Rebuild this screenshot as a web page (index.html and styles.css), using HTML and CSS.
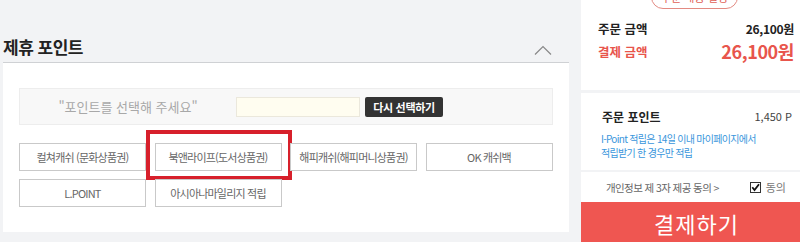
FILE: index.html
```html
<!DOCTYPE html>
<html lang="ko">
<head>
<meta charset="utf-8">
<link rel="stylesheet" href="styles.css">
</head>
<body>
<div class="page">
  <section class="left">
    <div class="head">
      <h2 class="title">제휴 포인트</h2>
      <svg class="chev" width="18" height="10" viewBox="0 0 18 10"><path d="M1 9.5 L9 1.5 L17 9.5" fill="none" stroke="#888" stroke-width="1.2"/></svg>
    </div>
    <div class="panel">
      <div class="selbox">
        <div class="hint">"포인트를 선택해 주세요"</div>
        <div class="field"></div>
        <button class="reset">다시 선택하기</button>
      </div>
      <div class="grid">
        <div class="opt">컬쳐캐쉬 (문화상품권)</div>
        <div class="opt hl">북앤라이프(도서상품권)<span class="mark"></span></div>
        <div class="opt">해피캐쉬(해피머니상품권)</div>
        <div class="opt">OK 캐쉬백</div>
        <div class="opt">L.POINT</div>
        <div class="opt">아시아나마일리지 적립</div>
      </div>
    </div>
  </section>
  <aside class="right">
    <div class="card sum">
      <div class="pill">주문 배송 설정</div>
      <div class="row r1"><span class="lbl">주문 금액</span><span class="amt">26,100원</span></div>
      <div class="row r2"><span class="lbl red">결제 금액</span><span class="big">26,100원</span></div>
    </div>
    <div class="card pts">
      <div class="row r3"><span class="lbl2">주문 포인트</span><span class="pval">1,450 P</span></div>
      <p class="note">I-Point 적립은 14일 이내 마이페이지에서<br>적립받기 한 경우만 적립</p>
    </div>
    <div class="agree">
      <span class="atext">개인정보 제 3자 제공 동의 &gt;</span>
      <span class="chk"><svg width="11" height="11" viewBox="0 0 11 11"><rect x="0.5" y="0.5" width="10" height="10" fill="#fff" stroke="#333"/><path d="M2.3 5.3 L4.5 8 L9 2.2" fill="none" stroke="#111" stroke-width="1.8"/></svg>동의</span>
    </div>
    <button class="pay">결제하기</button>
  </aside>
</div>
</body>
</html>
```
FILE: styles.css
```css
* { box-sizing: border-box; }
html, body { margin: 0; padding: 0; }
body {
  background: #f2f3f5;
  font-family: "Noto Sans CJK KR", "Noto Sans", sans-serif;
  color: #333;
  width: 800px;
  height: 242px;
  overflow: hidden;
}
.page {
  display: flex;
  gap: 12px;
  padding-left: 3px;
}
.left { width: 566px; }
.head {
  height: 63px;
  display: flex;
  align-items: center;
  justify-content: space-between;
  padding: 30px 17px 0 0;
  border-bottom: 1px solid #cfd1d4;
}
.title {
  margin: 0;
  font-size: 17px;
  font-weight: 700;
  color: #222;
  letter-spacing: -0.5px;
}
.chev { margin-top: 7px; }
.panel {
  background: #fff;
  height: 169px;
  padding: 25px 16px 0 16px;
}
.selbox {
  height: 37px;
  background: #f8f8f8;
  border: 1px solid #ededed;
  display: flex;
  align-items: center;
}
.hint {
  width: 216px;
  text-align: center;
  font-size: 13px;
  color: #a8a8a8;
}
.field {
  width: 124px;
  height: 20px;
  background: #fffdf0;
  border: 1px solid #ebe8dc;
}
.reset {
  margin-left: 5px;
  width: 78px;
  height: 20px;
  border: 0;
  border-radius: 2px;
  background: #333;
  color: #fff;
  font-family: inherit;
  font-size: 11px;
  font-weight: 700;
  padding: 0;
  line-height: 20px;
  letter-spacing: -0.3px;
}
.grid {
  margin-top: 18px;
  display: grid;
  grid-template-columns: repeat(4, 127px);
  column-gap: 8.5px;
  row-gap: 8px;
  grid-auto-rows: 28px;
}
.opt {
  position: relative;
  border: 1px solid #c9c9c9;
  background: #fff;
  display: flex;
  align-items: center;
  justify-content: center;
  font-size: 11px;
  color: #666;
  letter-spacing: -0.8px;
  white-space: nowrap;
}
.mark {
  position: absolute;
  left: -10px;
  top: -14px;
  width: 146px;
  height: 50px;
  border: 4px solid #d7202b;
}
.right {
  width: 219px;
  display: flex;
  flex-direction: column;
}
.card { background: #fff; }
.sum {
  height: 90px;
  padding: 0 6px 0 17px;
}
.pill {
  margin: -15px 0 0 53px;
  width: 87px;
  height: 24px;
  border: 1px solid #e38a82;
  border-radius: 12px;
  text-align: center;
  font-size: 11px;
  line-height: 22px;
  color: #e06056;
}
.row {
  display: flex;
  justify-content: space-between;
  align-items: center;
}
.r1 { margin-top: 8px; height: 22px; }
.r2 { height: 24px; }
.lbl { font-size: 12.5px; font-weight: 700; color: #222; }
.lbl.red { color: #e8554c; }
.amt { font-size: 12px; font-weight: 700; color: #222; letter-spacing: -0.3px; }
.big { font-size: 18px; font-weight: 700; color: #e8554c; letter-spacing: -0.4px; }
.pts {
  margin-top: 3px;
  height: 77px;
  padding: 13px 8px 0 21px;
}
.r3 { height: 20px; }
.lbl2 { font-size: 12px; font-weight: 700; color: #222; }
.pval { font-size: 11px; color: #444; }
.note {
  margin: 6px 0 0 -1px;
  font-size: 10px;
  line-height: 14px;
  color: #3a96dc;
  letter-spacing: -0.7px;
}
.agree {
  margin-top: 2px;
  height: 30px;
  background: #fff;
  display: flex;
  align-items: center;
  justify-content: space-between;
  padding: 0 14px 0 25px;
}
.atext { font-size: 10.5px; color: #666; letter-spacing: -0.6px; }
.chk {
  display: flex;
  align-items: center;
  gap: 5px;
  font-size: 11px;
  color: #777;
}
.pay {
  height: 42px;
  border: 0;
  background: #ef5651;
  color: #fff;
  font-family: inherit;
  font-size: 22px;
  letter-spacing: 1px;
  padding: 0 0 0 12px;
  line-height: 40px;
}
```
